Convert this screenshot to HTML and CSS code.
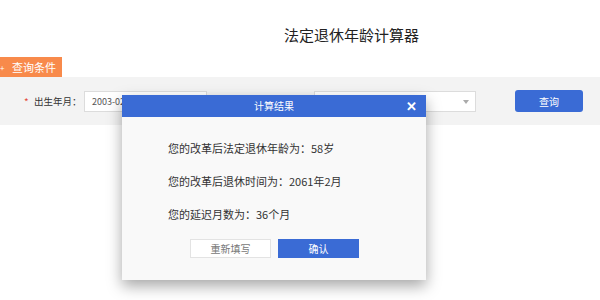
FILE: index.html
```html
<!DOCTYPE html>
<html lang="zh-CN">
<head>
    <meta charset="UTF-8" />
    <title>法定退休年龄计算器</title>
    <link rel="stylesheet" href="styles.css">
</head>
<body>

    <h1 class="title">法定退休年龄计算器</h1>

    <div class="tab"><span class="tab-mark">+</span>查询条件</div>

    <div class="query">
        <span class="req">*</span>
        <label class="field-label">出生年月：</label>
        <div class="input">2003-02</div>
        <div class="select"><span class="arrow"></span></div>
        <button class="btn-query">查询</button>
    </div>

    <div class="dialog">
        <div class="dialog-head">
            计算结果
            <span class="dialog-close">&#10005;</span>
        </div>
        <div class="dialog-body">
            <p>您的改革后法定退休年龄为：58岁</p>
            <p>您的改革后退休时间为：2061年2月</p>
            <p>您的延迟月数为：36个月</p>
            <div class="dialog-actions">
                <button class="btn-reset">重新填写</button>
                <button class="btn-ok">确认</button>
            </div>
        </div>
    </div>

</body>
</html>
```

FILE: styles.css
```css
:root {
    --blue: #3a6bd5;
    --orange: #f88a4b;
    --text: #333;
}

* {
    box-sizing: border-box;
    margin: 0;
    padding: 0
}

body {
    font-family: "Noto Sans CJK SC", "Noto Sans", sans-serif;
    color: var(--text);
    background: #fff;
    position: relative;
    width: 600px;
    height: 300px;
    overflow: hidden;
}

.title {
    height: 57px;
    padding-top: 24px;
    padding-left: 103px;
    text-align: center;
    font-size: 15px;
    line-height: 22px;
    font-weight: normal;
    color: #222;
}

.tab {
    display: flex;
    align-items: center;
    width: 62px;
    height: 20px;
    background: var(--orange);
    color: #fff;
    font-size: 11px;
    white-space: nowrap;
}

    .tab-mark {
        width: 12px;
        font-size: 8px;
    }

.query {
    display: flex;
    align-items: center;
    height: 48px;
    padding-left: 24px;
    background: #f3f3f3;
}

.req {
    width: 10px;
    font-size: 10px;
    color: #e34a3b;
}

.field-label {
    width: 50px;
    font-size: 9.5px;
    color: #333;
    white-space: nowrap;
}

.input {
    width: 123px;
    height: 21px;
    padding-left: 7px;
    line-height: 19px;
    font-size: 9px;
    color: #555;
    background: #fff;
    border: 1px solid #dcdcdc;
}

.select {
    position: relative;
    width: 162px;
    height: 21px;
    margin-left: 107px;
    background: #fff;
    border: 1px solid #dcdcdc;
}

    .arrow {
        position: absolute;
        right: 6px;
        top: 8px;
        border-left: 3px solid transparent;
        border-right: 3px solid transparent;
        border-top: 4px solid #aaa;
    }

.btn-query {
    width: 68px;
    height: 22px;
    margin-left: 39px;
    border: none;
    border-radius: 3px;
    background: var(--blue);
    color: #fff;
    font-family: inherit;
    font-size: 10px;
}

.dialog {
    position: absolute;
    left: 122px;
    top: 95px;
    width: 304px;
    height: 185px;
    background: #f9f9f9;
    box-shadow: 0 6px 14px rgba(0, 0, 0, .35);
}

.dialog-head {
    position: relative;
    height: 22px;
    line-height: 22px;
    background: var(--blue);
    color: #fff;
    font-size: 10px;
    text-align: center;
}

.dialog-close {
    position: absolute;
    right: 9px;
    top: 0;
    font-size: 13px;
    font-weight: 700;
}

.dialog-body {
    padding: 23px 0 0 46px;
}

    .dialog-body p {
        font-size: 11px;
        line-height: 16px;
        margin-bottom: 17px;
    }

.dialog-actions {
    display: flex;
    gap: 7px;
    margin-left: 22px;
    margin-top: 9px;
}

    .dialog-actions button {
        width: 81px;
        height: 19px;
        font-family: inherit;
        font-size: 10px;
    }

.btn-reset {
    background: #fff;
    border: 1px solid #e3e3e3;
    color: #777;
}

.btn-ok {
    background: var(--blue);
    border: none;
    color: #fff;
}
```
